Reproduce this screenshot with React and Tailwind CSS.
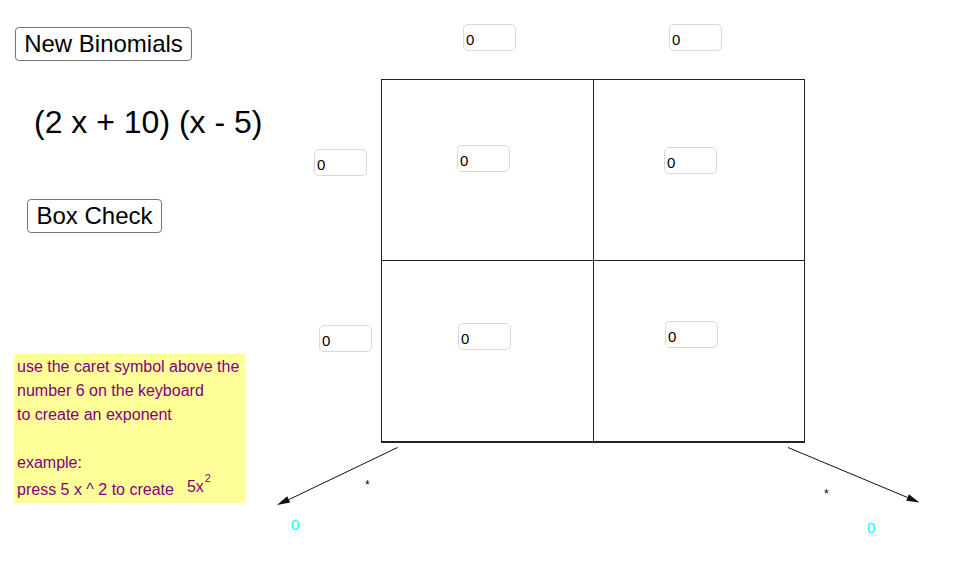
const font = { fontFamily: '"Liberation Sans", Arial, sans-serif' };

// answer fields, placed where the applet drew them
const fields = [
  [463, 24],
  [669, 24],
  [314, 149],
  [319, 325],
  [457, 145],
  [664, 147],
  [458, 323],
  [665, 321],
];

function Field({ x, y }) {
  return (
    <input
      defaultValue="0"
      className="absolute w-[53px] h-[27px] border border-[#d9d9d9] rounded-[5px] bg-white pl-[2px] pt-[3px] text-[15px] text-black outline-none"
      style={{ left: x, top: y, ...font }}
    />
  );
}

function Arrows() {
  return (
    <svg className="absolute inset-0 pointer-events-none" width="958" height="572">
      <line x1="397.5" y1="447.5" x2="289" y2="499.5" stroke="#111" strokeWidth="1" />
      <polygon points="277,505 290.2,502.6 287.2,496.2" fill="#111" />
      <line x1="788" y1="447.5" x2="907.5" y2="497.5" stroke="#111" strokeWidth="1" />
      <polygon points="919.5,502.5 906.2,500.7 908.9,494.3" fill="#111" />
    </svg>
  );
}

export default function App() {
  return (
    <div className="relative w-[958px] h-[572px] bg-white overflow-hidden text-black" style={font}>
      <button className="absolute left-[15px] top-[27px] w-[177px] h-[34px] flex items-center justify-center border border-[#747474] rounded-[4px] bg-white text-[24px] leading-none">
        New Binomials
      </button>

      <div className="absolute left-[34px] top-[106px] text-[32px] leading-[32px] whitespace-pre">
        (2 x + 10) (x - 5)
      </div>

      <button className="absolute left-[27px] top-[199px] w-[135px] h-[34px] flex items-center justify-center border border-[#747474] rounded-[4px] bg-white text-[24px] leading-none">
        Box Check
      </button>

      <div className="absolute left-[14px] top-[354px] w-[231px] h-[149px] bg-[#ffff99] px-[3px] pt-[1px] text-[16px] leading-[24px] text-[#800080] whitespace-nowrap">
        <div>use the caret symbol above the</div>
        <div>number 6 on the keyboard</div>
        <div>to create an exponent</div>
        <div>&nbsp;</div>
        <div>example:</div>
        <div>
          press 5 x ^ 2 to create
          <span className="ml-[13px] align-[3px] text-[16px]">
            5x<sup className="text-[11px] align-[5px] ml-[1px]">2</sup>
          </span>
        </div>
      </div>

      {/* the area box */}
      <div className="absolute left-[381px] top-[79px] w-[424px] h-[364px] grid grid-cols-[212px_1fr] grid-rows-[181px_1fr] border-t border-l border-r border-b-2 border-[#222]">
        <div className="border-r border-b border-[#222]" />
        <div className="border-b border-[#222]" />
        <div className="border-r border-[#222]" />
        <div />
      </div>

      {fields.map(([x, y], i) => (
        <Field key={i} x={x} y={y} />
      ))}

      <Arrows />

      <div className="absolute left-[365px] top-[479px] text-[12px] leading-[12px]">*</div>
      <div className="absolute left-[824px] top-[488px] text-[12px] leading-[12px]">*</div>

      <div className="absolute left-[291px] top-[517px] text-[15px] leading-[15px] text-[#00ffff]">0</div>
      <div className="absolute left-[867px] top-[520px] text-[15px] leading-[15px] text-[#00ffff]">0</div>
    </div>
  );
}
